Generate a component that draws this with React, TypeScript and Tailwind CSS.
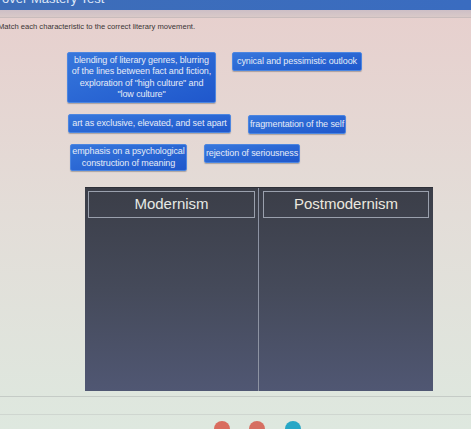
import React from "react";

const font = { fontFamily: '"Liberation Sans", Arial, sans-serif' };

function Card({ children, className }: { children: React.ReactNode; className: string }) {
  return (
    <div
      className={
        "flex items-center justify-center whitespace-nowrap rounded-[2px] border border-[#4d86e0] bg-gradient-to-br from-[#3777dc] to-[#1f57cc] text-center text-[9px] leading-[11.5px] tracking-[-0.1px] text-[#e6ebf6] shadow-[0_1px_1px_rgba(0,0,0,0.25)] " +
        className
      }
    >
      {children}
    </div>
  );
}

export default function App() {
  return (
    <div
      className="relative h-[429px] w-[471px] overflow-hidden bg-gradient-to-b from-[#e7cfcd] via-[#e3ddd8] to-[#dee8df]"
      style={font}
    >
      <div className="h-[10px] overflow-hidden bg-gradient-to-r from-[#3d6db8] to-[#3a6cc0]">
        <div className="-mt-[9px] pl-[2px] text-[13px] leading-[15px] text-[#dfe8f8]">over Mastery Test</div>
      </div>
      <div className="h-[7px] bg-gradient-to-b from-[#cdbfc6] to-[#d9c9c8]" />
      <div className="h-px bg-[#c9bcbc]" />
      <div className="mt-[4px] -ml-[2px] text-[7.6px] leading-[9px] text-[#3a3535]">
        Match each characteristic to the correct literary movement.
      </div>

      <div className="mt-[21px] flex items-start">
        <Card className="ml-[67px] h-[51px] w-[149px]">
          <div>
            blending of literary genres, blurring
            <br />
            of the lines between fact and fiction,
            <br />
            exploration of "high culture" and
            <br />
            "low culture"
          </div>
        </Card>
        <Card className="ml-[16px] h-[19px] w-[130px]">cynical and pessimistic outlook</Card>
      </div>

      <div className="mt-[11px] flex items-start">
        <Card className="ml-[68px] h-[19px] w-[163px]">art as exclusive, elevated, and set apart</Card>
        <Card className="ml-[17px] mt-px h-[19px] w-[98px]">fragmentation of the self</Card>
      </div>

      <div className="mt-[10px] flex items-start">
        <Card className="ml-[70px] h-[27px] w-[117px]">
          <div>
            emphasis on a psychological
            <br />
            construction of meaning
          </div>
        </Card>
        <Card className="ml-[17px] h-[19px] w-[96px]">rejection of seriousness</Card>
      </div>

      <div className="ml-[85px] mt-[16px] flex h-[204px] w-[348px] border-t border-[#2e3038] bg-gradient-to-b from-[#3b3e48] via-[#454a5a] to-[#505773]">
        <div className="w-[174px] border-r border-[#8d93a3] px-[3px] pt-[3px]">
          <div className="flex h-[27px] items-center justify-center border border-[#9aa0ad] text-[15px] text-[#e6e9e4]">
            Modernism
          </div>
        </div>
        <div className="w-[174px] pl-[4px] pr-[4px] pt-[3px]">
          <div className="flex h-[27px] items-center justify-center border border-[#9aa0ad] text-[15px] text-[#ebe8df]">
            Postmodernism
          </div>
        </div>
      </div>

      <div className="mt-[5px] h-px bg-[#c5cbc6]" />
      <div className="mt-[17px] h-px bg-[#cfd6d0]" />
      <div className="absolute left-[214px] top-[421px] h-[16px] w-[16px] rounded-full bg-[#d96c5e]" />
      <div className="absolute left-[249px] top-[421px] h-[16px] w-[16px] rounded-full bg-[#d66f62]" />
      <div className="absolute left-[285px] top-[421px] h-[16px] w-[16px] rounded-full bg-[#27a7c6]" />
    </div>
  );
}
